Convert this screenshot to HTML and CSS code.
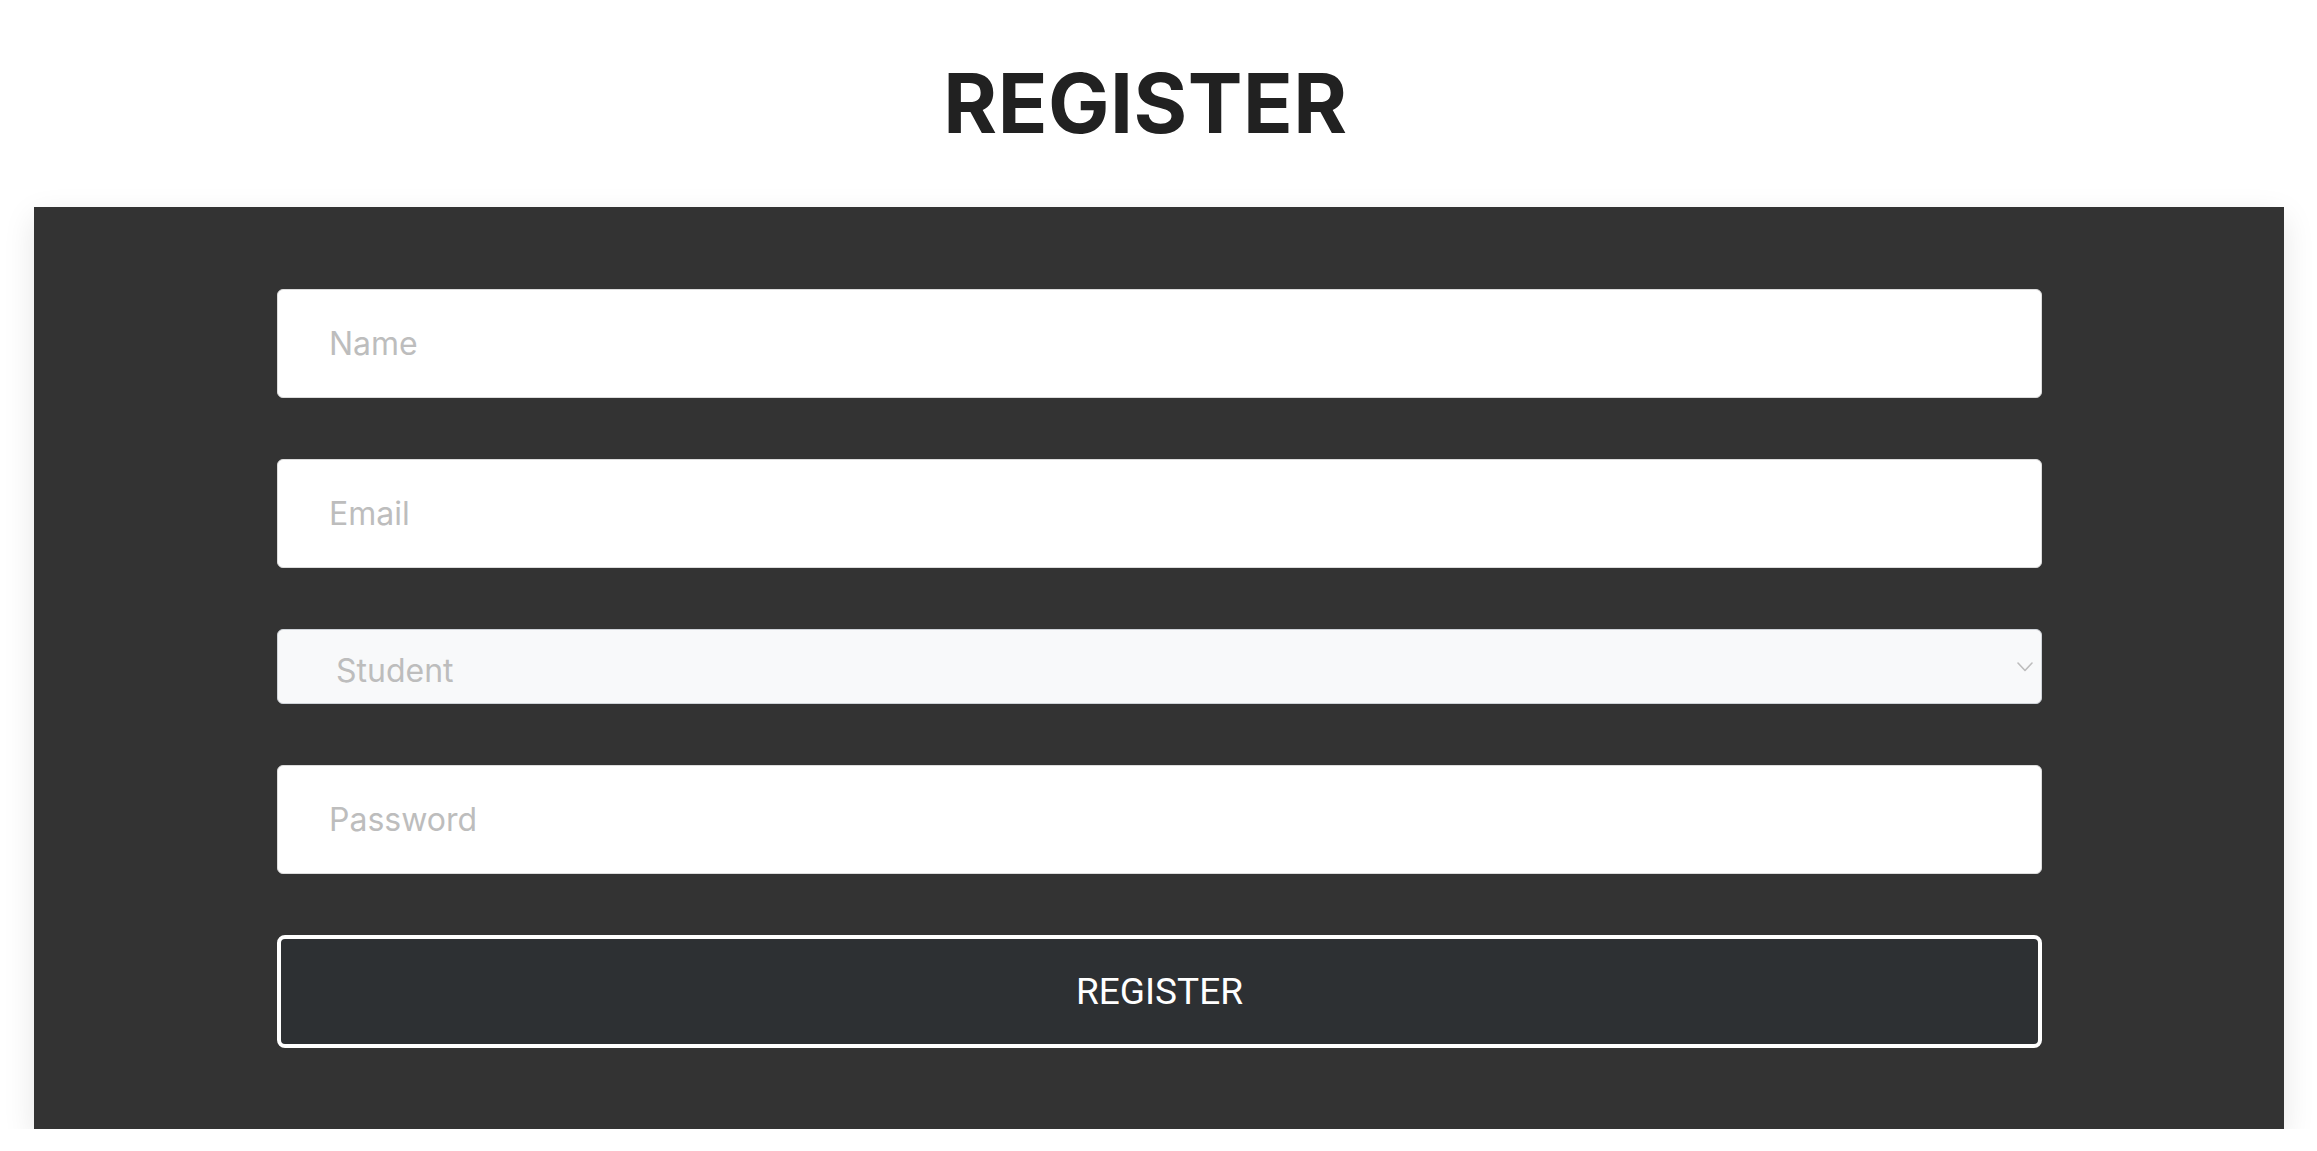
FILE: index.html
```html
<!DOCTYPE html>
<html lang="en">
<head>
<meta charset="utf-8">
<title>Register</title>
<link rel="stylesheet" href="styles.css">
</head>
<body>
<header class="page-head">
  <h1 class="title">REGISTER</h1>
</header>
<main class="panel">
  <form class="form">
    <input class="field" type="text" placeholder="Name">
    <input class="field" type="email" placeholder="Email">
    <div class="select-wrap">
      <select class="select">
        <option>Student</option>
        <option>Teacher</option>
      </select>
      <svg class="chevron" viewBox="0 0 16 10" width="16" height="10" aria-hidden="true">
        <path d="M1 1 L8 8.5 L15 1" fill="none" stroke="#bdbdbd" stroke-width="1.6" stroke-linecap="round" stroke-linejoin="round"/>
      </svg>
    </div>
    <input class="field" type="password" placeholder="Password">
    <button class="submit" type="button">REGISTER</button>
  </form>
</main>
</body>
</html>
```
FILE: styles.css
```css
html, body {
  margin: 0;
  padding: 0;
  background: #ffffff;
}

body {
  font-family: "Inter", "Roboto", "Liberation Sans", sans-serif;
}

.page-head {
  height: 207px;
  display: flex;
  align-items: center;
  justify-content: center;
  padding-right: 26px;
}

.title {
  margin: 0;
  font-family: "Inter", "Roboto", sans-serif;
  font-weight: 700;
  font-size: 82px;
  letter-spacing: 0.5px;
  color: #212121;
}

.panel {
  margin: 0 33px 0 34px;
  background: #333333;
  padding: 82px 242px 81px 243px;
  box-shadow: 0 10px 30px rgba(0, 0, 0, 0.10);
}

.form {
  display: flex;
  flex-direction: column;
  gap: 61px;
}

.field {
  box-sizing: border-box;
  height: 109px;
  width: 100%;
  margin: 0;
  padding: 0 0 0 51px;
  border: 1.5px solid #dcdcdc;
  border-radius: 6px;
  background: #ffffff;
  font-family: "Inter", sans-serif;
  font-size: 32px;
  color: #333;
  outline: none;
}

.field::placeholder {
  color: #bdbdbd;
}

.select-wrap {
  position: relative;
}

.select {
  box-sizing: border-box;
  display: block;
  width: 100%;
  height: 75px;
  margin: 0;
  padding: 8px 0 0 58px;
  border: 1.5px solid #cfd3d8;
  border-radius: 6px;
  background: #f8f9fa;
  font-family: "Inter", sans-serif;
  font-size: 32px;
  color: #bdbdbd;
  appearance: none;
  -webkit-appearance: none;
  outline: none;
}

.chevron {
  position: absolute;
  right: 9px;
  top: 33px;
}

.submit {
  box-sizing: border-box;
  height: 113px;
  width: 100%;
  margin: 0;
  border: 4px solid #ffffff;
  border-radius: 8px;
  background: #2d3033;
  color: #ffffff;
  font-family: "Roboto", "Liberation Sans", sans-serif;
  font-size: 37px;
  font-weight: 400;
  cursor: pointer;
}
```
